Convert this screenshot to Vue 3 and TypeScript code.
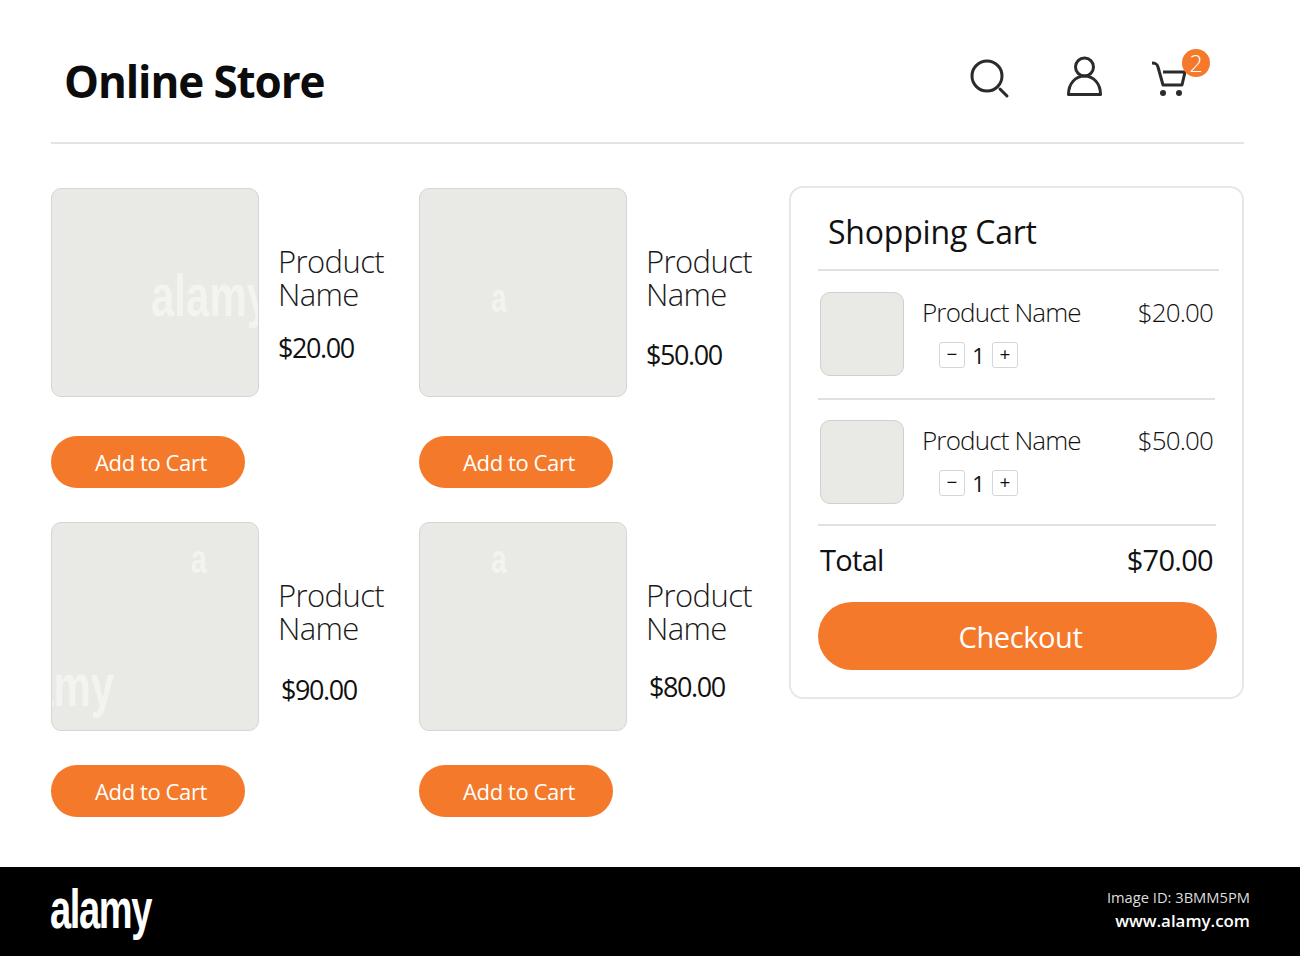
<template>
  <div class="page">
    <header class="top">
      <h1>Online Store</h1>
      <div class="icons">
        <svg class="ic-search" width="42" height="42" viewBox="0 0 42 42" fill="none" stroke="#2b2b2b" stroke-width="3">
          <circle cx="18" cy="18" r="15" />
          <path d="M31 31l7 7" stroke-linecap="round" />
        </svg>
        <svg class="ic-user" width="38" height="44" viewBox="0 0 38 44" fill="none" stroke="#2b2b2b" stroke-width="3">
          <circle cx="18.500" cy="12" r="9" />
          <path d="M2.500 39.500h32c0-11-7-18.500-16-18.500s-16 7.500-16 18.500z" stroke-linejoin="round" />
        </svg>
        <div class="cart-icon">
          <svg width="40" height="44" viewBox="0 0 40 44" fill="none" stroke="#2b2b2b" stroke-width="3">
            <path d="M2 3c4 0 5 1 6 4l5 18h19l3-13H13" stroke-linejoin="round" />
            <circle cx="13" cy="33" r="3" fill="#2b2b2b" stroke="none" />
            <circle cx="29" cy="33" r="3" fill="#2b2b2b" stroke="none" />
          </svg>
          <span class="badge">2</span>
        </div>
      </div>
    </header>

    <main class="content">
      <section class="products">
        <article v-for="p in products" :key="p.price" class="product">
          <div class="top-row">
            <div class="tile">
              <span
                v-for="m in p.marks"
                :key="m.x"
                class="mark"
                :style="{ left: m.x + 'px', top: m.y + 'px', fontSize: m.size + 'px' }"
              >{{ m.text }}</span>
            </div>
            <div class="info">
              <div class="name">Product<br>Name</div>
              <div class="price" :style="{ marginTop: p.dy + 'px', marginLeft: p.dx + 'px' }">{{ p.price }}</div>
            </div>
          </div>
          <button class="add">Add to Cart</button>
        </article>
      </section>

      <aside class="cart">
        <h2>Shopping Cart</h2>
        <div v-for="item in cartItems" :key="item.price" class="line">
          <div class="thumb"></div>
          <div class="line-main">
            <div class="line-head">
              <span class="line-name">Product Name</span>
              <span class="line-price">{{ item.price }}</span>
            </div>
            <div class="stepper">
              <span class="step">−</span>
              <span class="qty">1</span>
              <span class="step">+</span>
            </div>
          </div>
        </div>
        <div class="total">
          <span>Total</span>
          <span>$70.00</span>
        </div>
        <button class="checkout">Checkout</button>
      </aside>
    </main>

    <footer class="stock">
      <span class="logo">alamy</span>
      <div class="stock-meta">
        <div>Image ID: 3BMM5PM</div>
        <div class="site">www.alamy.com</div>
      </div>
    </footer>
  </div>
</template>

<script setup lang="ts">
const products = [
  { price: '$20.00', dy: 20, dx: 0, marks: [{ text: 'alamy', x: 99, y: 77, size: 60 }] },
  { price: '$50.00', dy: 27, dx: 0, marks: [{ text: 'a', x: 71, y: 79, size: 40 }] },
  {
    price: '$90.00',
    dy: 28,
    dx: 3,
    marks: [
      { text: 'a', x: 139, y: 6, size: 40 },
      { text: 'alamy', x: -57, y: 133, size: 60 },
    ],
  },
  { price: '$80.00', dy: 25, dx: 3, marks: [{ text: 'a', x: 71, y: 6, size: 40 }] },
]

const cartItems = [{ price: '$20.00' }, { price: '$50.00' }]
</script>

<style>
body {
  margin: 0;
  background: #fff;
}
</style>

<style scoped>
.page {
  width: 1300px;
  height: 956px;
  display: flex;
  flex-direction: column;
  font-family: "Open Sans", "Liberation Sans", sans-serif;
  color: #111;
  overflow: hidden;
}
.top {
  height: 142px;
  margin: 0 56px 0 51px;
  padding-left: 13px;
  border-bottom: 2px solid #e2e4e4;
  display: flex;
  justify-content: space-between;
}
h1 {
  margin: 56px 0 0;
  font-size: 44px;
  line-height: 50px;
  font-weight: 700;
  letter-spacing: -1.100px;
  color: #0c0c0c;
}
.icons {
  display: flex;
  align-items: flex-start;
  padding-top: 55px;
  margin-right: 36px;
}
.ic-search {
  margin-top: 3px;
  margin-right: 55px;
}
.ic-user {
  margin-right: 46px;
}
.cart-icon {
  position: relative;
  width: 58px;
  height: 44px;
  margin-top: 5px;
}
.badge {
  position: absolute;
  left: 32px;
  top: -11px;
  width: 28px;
  height: 28px;
  border-radius: 50%;
  background: #f4792b;
  color: #fff;
  font-size: 23px;
  font-weight: 300;
  line-height: 28px;
  text-align: center;
}
.content {
  flex: 1;
  display: flex;
  padding: 44px 56px 0 51px;
}
.products {
  width: 738px;
  flex: none;
  display: grid;
  grid-template-columns: 368px 368px;
  grid-auto-rows: 334px;
}
.top-row {
  display: flex;
}
.tile {
  position: relative;
  width: 206px;
  height: 207px;
  flex: none;
  background: #e9eae6;
  border: 1px solid #d6d7d3;
  border-radius: 10px;
  overflow: hidden;
}
.mark {
  position: absolute;
  font-family: "Liberation Sans", sans-serif;
  line-height: 60px;
  font-weight: 700;
  color: #f3f3f0;
  transform: scaleX(0.7);
  transform-origin: left top;
}
.info {
  padding: 57px 0 0 19px;
}
.name {
  font-size: 31px;
  font-weight: 300;
  letter-spacing: -0.6px;
  line-height: 33px;
  color: #1a1a1a;
}
.price {
  font-size: 27px;
  line-height: 34px;
  letter-spacing: -1.400px;
}
.add {
  display: block;
  width: 194px;
  height: 52px;
  margin-top: 39px;
  border: 0;
  border-radius: 26px;
  padding: 0 0 0 6px;
  background: #f4792b;
  color: #fff;
  font-family: inherit;
  font-size: 22px;
  letter-spacing: -0.4px;
}
.product:nth-child(n + 3) .add {
  margin-top: 34px;
}
.cart {
  width: 403px;
  height: 509px;
  margin-top: -2px;
  border: 2px solid #e6e7e7;
  border-radius: 14px;
  padding: 0 25px 0 27px;
}
h2 {
  margin: 0 -2px 0 0;
  padding: 0 0 0 10px;
  height: 83px;
  box-sizing: border-box;
  border-bottom: 2px solid #e0e1e1;
  font-size: 32px;
  font-weight: 400;
  letter-spacing: -0.2px;
  line-height: 88px;
}
.line {
  display: flex;
  height: 129px;
  padding: 21px 2px 0 2px;
  margin-right: 2px;
  box-sizing: border-box;
  border-bottom: 2px solid #e0e1e1;
}
.line:nth-of-type(2) {
  height: 126px;
  padding-top: 20px;
  padding-right: 3px;
  margin-right: 1px;
}
.thumb {
  width: 82px;
  height: 82px;
  flex: none;
  background: #e9eae6;
  border: 1px solid #d0d1cd;
  border-radius: 10px;
}
.line-main {
  flex: 1;
  padding-left: 18px;
}
.line-head {
  display: flex;
  justify-content: space-between;
  margin-top: -1px;
  font-size: 26px;
  font-weight: 300;
  letter-spacing: -0.85px;
  line-height: 42px;
}
.stepper {
  display: flex;
  align-items: center;
  margin: 7px 0 0 17px;
}
.step {
  width: 24px;
  height: 24px;
  border: 1px solid #d6d6d6;
  border-radius: 3px;
  font-size: 19px;
  line-height: 23px;
  text-align: center;
}
.qty {
  width: 27px;
  font-size: 22px;
  text-align: center;
}
.total {
  display: flex;
  justify-content: space-between;
  height: 76px;
  padding: 0 4px 0 2px;
  font-size: 29px;
  font-weight: 500;
  letter-spacing: -0.7px;
  line-height: 68px;
}
.checkout {
  display: block;
  width: 399px;
  height: 68px;
  border: 0;
  border-radius: 34px;
  background: #f4792b;
  color: #fff;
  font-family: inherit;
  font-size: 29px;
  letter-spacing: -0.4px;
  padding: 0 0 0 6px;
}
.stock {
  height: 89px;
  flex: none;
  background: #000;
  color: #fff;
  display: flex;
  justify-content: space-between;
  padding: 0 50px;
}
.logo {
  font-family: "Liberation Sans", sans-serif;
  font-size: 56px;
  font-weight: 700;
  line-height: 84px;
  letter-spacing: -2px;
  display: inline-block;
  transform: scaleX(0.68);
  transform-origin: left center;
}
.stock-meta {
  padding-top: 19px;
  font-size: 14.700px;
  line-height: 23px;
  text-align: right;
  color: #ddd;
}
.site {
  color: #fff;
  font-size: 16.900px;
  font-weight: 600;
}
</style>
